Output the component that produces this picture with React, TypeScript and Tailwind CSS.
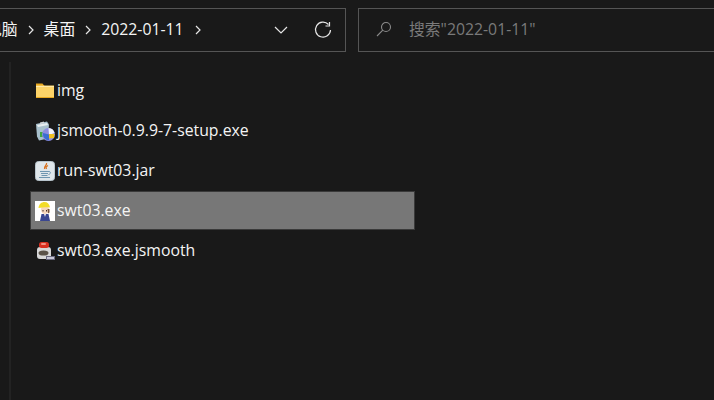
const files = [
  { name: "img", icon: "folder" },
  { name: "jsmooth-0.9.9-7-setup.exe", icon: "setup" },
  { name: "run-swt03.jar", icon: "jar" },
  { name: "swt03.exe", icon: "worker", selected: true },
  { name: "swt03.exe.jsmooth", icon: "bottle" },
];

function FolderIcon() {
  return (
    <svg width="20" height="20" viewBox="0 0 20 20">
      <path d="M1 2.500h6.500l2 2.500H1z" fill="#e8a820" />
      <rect x="1" y="4.500" width="18" height="12.500" fill="#fcd368" />
      <rect x="1" y="16" width="18" height="1" fill="#e8a820" />
      <rect x="1" y="5" width="18" height="1" fill="#ffe9a6" />
    </svg>
  );
}

function SetupIcon() {
  return (
    <svg width="20" height="20" viewBox="0 0 20 20">
      <path d="M1 3l11-2.500 2 3-1 14-9 2-2-4z" fill="#a8c0cc" />
      <path d="M2 4l10-2 1 2-10 2z" fill="#e8eef0" />
      <path d="M5 1.500l4-1v2l-4 .5z" fill="#d0d4d8" />
      <rect x="5" y="11" width="3" height="5" fill="#40a840" />
      <circle cx="13.500" cy="13.500" r="6.500" fill="#8c8ce0" />
      <path d="M13.500 7a6.500 6.500 0 0 1 6 5l-5.500 2z" fill="#f2f4fa" />
      <path d="M14 13l5.500 0-.5 4-5 .5z" fill="#f0c020" />
      <path d="M8 12l6 1.500v6a6.500 6.500 0 0 1-6-7.500z" fill="#3a6ed0" />
    </svg>
  );
}

function JarIcon() {
  return (
    <svg width="20" height="20" viewBox="0 0 20 20">
      <rect x="0.500" y="0.500" width="19" height="19" rx="3" fill="#dfe6ea" stroke="#b8c4cc" />
      <path d="M11.500 2c1 2-3 3.500-2 6M13 4.500c-2 1-2.500 2-1.500 3.500" fill="none" stroke="#d8701c" strokeWidth="1.300" />
      <path d="M5 10.500h9M6 12.500h7M6.500 14.500h6M4 16.500h11" stroke="#6f96b0" strokeWidth="1" fill="none" />
      <path d="M14 10.500c2 0 2 2.500-.5 3" stroke="#6f96b0" fill="none" />
    </svg>
  );
}

function WorkerIcon() {
  return (
    <svg width="20" height="20" viewBox="0 0 20 20">
      <rect width="20" height="20" fill="#ffffff" />
      <path d="M6.500 13h7l1.500 7H5z" fill="#3a4690" />
      <path d="M9 13h2l-1 3z" fill="#f0f0f4" />
      <ellipse cx="10" cy="8.500" rx="4" ry="4.500" fill="#f6d6bc" />
      <path d="M3.500 7C4 3 6.500 1 9.500 1s5 2 5.500 5.500c-3-.5-8 0-11.500.5z" fill="#f2dc28" />
      <path d="M12.500 8h2v3.500l-1.500 1z" fill="#7a5238" />
      <rect x="11" y="9" width="1" height="1.500" fill="#403028" />
      <rect x="7.500" y="9" width="1" height="1.500" fill="#403028" />
    </svg>
  );
}

function BottleIcon() {
  return (
    <svg width="20" height="20" viewBox="0 0 20 20">
      <rect x="2" y="6" width="14" height="12" rx="3" fill="#d8d8d8" />
      <rect x="4" y="1" width="10" height="6" rx="2.500" fill="#d83020" />
      <rect x="6" y="2" width="5" height="2" rx="1" fill="#f09080" />
      <ellipse cx="8.500" cy="12" rx="5" ry="2.500" fill="#5a5248" />
      <rect x="11" y="15" width="9" height="4" fill="#6a6a80" />
      <rect x="12" y="16" width="7" height="2" fill="#c8c8d8" />
    </svg>
  );
}

const icons: Record<string, () => React.JSX.Element> = {
  folder: FolderIcon,
  setup: SetupIcon,
  jar: JarIcon,
  worker: WorkerIcon,
  bottle: BottleIcon,
};

function Crumb() {
  return (
    <svg width="8" height="10" viewBox="0 0 8 10" className="block shrink-0">
      <path d="M2 1l4 4-4 4" fill="none" stroke="#e6e6e6" strokeWidth="1.200" />
    </svg>
  );
}

export default function App() {
  return (
    <div className="flex h-[400px] w-[714px] flex-col overflow-hidden bg-[#191919] font-['Open_Sans','Noto_Sans_CJK_SC',sans-serif] text-[15.8px] text-[#f4f4f4]">
      <div className="mt-2 flex h-[43px] shrink-0 gap-3">
        <div className="-ml-[10px] flex h-[44px] w-[356px] shrink-0 items-center border border-[#555555]">
          <span className="ml-[-5px] shrink-0">电脑</span>
          <span className="ml-[9px]"><Crumb /></span>
          <span className="ml-[9px] shrink-0">桌面</span>
          <span className="ml-[9px]"><Crumb /></span>
          <span className="ml-[9px] shrink-0">2022-01-11</span>
          <span className="ml-[10px]"><Crumb /></span>
          <svg width="14" height="8" viewBox="0 0 14 8" className="ml-[72px] shrink-0">
            <path d="M1 1l6 6 6-6" fill="none" stroke="#e6e6e6" strokeWidth="1.200" />
          </svg>
          <svg width="18" height="18" viewBox="0 0 18 18" className="ml-[26px] shrink-0">
            <path d="M14.500 3.500A7.500 7.500 0 1 0 16.500 9" fill="none" stroke="#e6e6e6" strokeWidth="1.200" />
            <path d="M15.500 1v4h-4" fill="none" stroke="#e6e6e6" strokeWidth="1.200" />
          </svg>
        </div>
        <div className="-mr-2 flex h-[44px] flex-1 items-center border border-[#555555] pl-[17px] text-[#7a7a7a]">
          <svg width="16" height="16" viewBox="0 0 16 16" className="mb-[2px] shrink-0">
            <circle cx="10" cy="6" r="4.500" fill="none" stroke="#8a8a8a" strokeWidth="1.100" />
            <path d="M6.800 9.200L1 15" fill="none" stroke="#8a8a8a" strokeWidth="1.100" />
          </svg>
          <span className="ml-[17px]">搜索"2022-01-11"</span>
        </div>
      </div>
      <div className="flex flex-1 pt-[11px]">
        <div className="ml-[9px] w-[2px] shrink-0 bg-[#232323]" />
        <ul className="ml-[19px] mt-[9px] flex w-[385px] flex-col gap-px">
          {files.map((f) => {
            const Icon = icons[f.icon];
            return (
              <li
                key={f.name}
                className={`flex h-[39px] items-center gap-[2px] border pl-[4px] ${
                  f.selected ? "border-[#3a3a3a] bg-[#777777]" : "border-transparent"
                }`}
              >
                <Icon />
                <span>{f.name}</span>
              </li>
            );
          })}
        </ul>
      </div>
    </div>
  );
}
